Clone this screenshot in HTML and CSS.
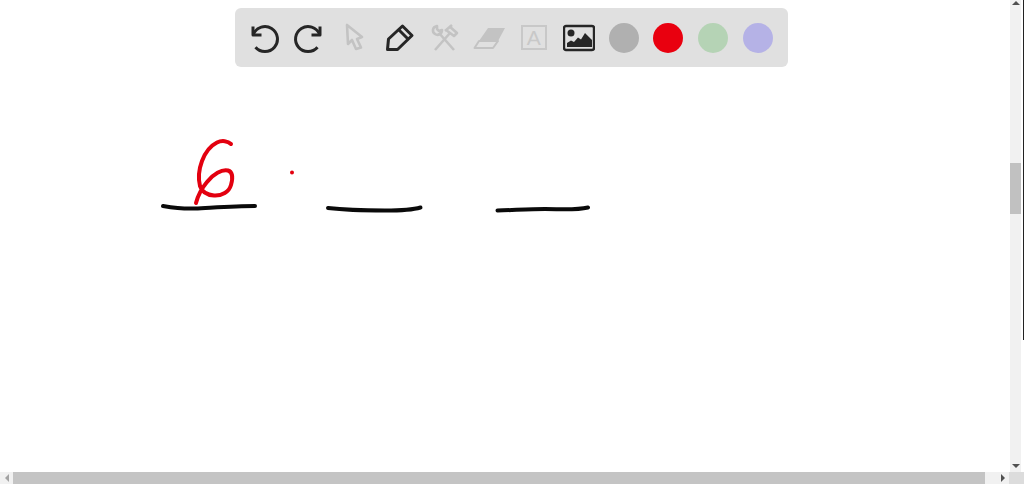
FILE: index.html
```html
<!DOCTYPE html>
<html lang="en">
<head>
    <meta charset="UTF-8">
    <meta name="viewport" content="width=device-width, initial-scale=1.0">
    <title>Whiteboard</title>
    <link rel="stylesheet" href="styles.css">
</head>
<body>
    <div class="app">
        <div class="main">
            <div class="board">
                <svg class="drawing" width="1010" height="472" viewBox="0 0 1010 472">
                    <g class="ink-black">
                        <path d="M163 206 C175 208 185 209 195 208.500 C215 207.500 235 206 255 206"/>
                        <path d="M328 208 C345 210 365 210.500 385 210.500 C400 210.500 412 210 420.500 207.500"/>
                        <path d="M497.500 210.500 C515 210 530 209 545 209 C560 209 575 210.500 588 207.500"/>
                    </g>
                    <path class="ink-red" d="M231 144 C228 141 222 140 217 142.500 C210 146 205 153 202 161 C199 169 198 178 200 186 C202 192 207 195 214 195.500 C222 196 229 192 231 185 C233 178 232.500 172 228 170.500 C222 169 213 174 207 182 C202 188 198 195 196 203"/>
                    <circle class="ink-dot" cx="292" cy="172.500" r="2"/>
                </svg>
                <div class="toolbar">
                    <button class="tool">
                        <svg class="icon" width="32" height="32" viewBox="0 0 32 32"><path class="line-dark" d="M5.500 12 A12.500 12.500 0 1 1 7.500 25.200"/><path class="line-dark" d="M5 4.500 V13 H13.500"/></svg>
                    </button>
                    <button class="tool">
                        <svg class="icon" width="32" height="32" viewBox="0 0 32 32"><path class="line-dark" d="M26.500 12 A12.500 12.500 0 1 0 24.500 25.200"/><path class="line-dark" d="M27 4.500 V13 H18.500"/></svg>
                    </button>
                    <button class="tool">
                        <svg class="icon" width="32" height="32" viewBox="0 0 32 32"><path class="line-muted" d="M9 3 L10 22 L14 18 L18 27 L23 25.500 L19 17 L24 15 Z"/></svg>
                    </button>
                    <button class="tool">
                        <svg class="icon" width="32" height="32" viewBox="0 0 32 32"><path class="line-dark" d="M4.500 27.500 L5.500 17 L19.500 4 L29 13.500 L14.500 27.500 Z"/><path class="line-dark" d="M16 8 L25.500 17.500"/></svg>
                    </button>
                    <button class="tool">
                        <svg class="icon" width="32" height="32" viewBox="0 0 32 32"><path class="line-muted" d="M11 11 L26 28 M22 11 L7 28"/><path class="line-muted" d="M9 4 C4 5 4 10 7 12 C10 14 14 12 14 8 L11 9 L9 7 Z"/><path class="line-muted" d="M17 9 L24 3 M21 4 L29 11 L26 14 L18 8"/></svg>
                    </button>
                    <button class="tool">
                        <svg class="icon" width="32" height="32" viewBox="0 0 32 32"><path class="fill-muted" d="M6 19 L15 6 L32 6 L25 19 Z"/><path class="line-thin" d="M6 19 L1.500 26 L20 26 L25 19 Z"/></svg>
                    </button>
                    <button class="tool">
                        <span class="text-tool">A</span>
                    </button>
                    <button class="tool">
                        <svg class="icon" width="32" height="32" viewBox="0 0 32 32"><rect class="line-frame" x="1" y="4" width="30" height="24" rx="2"/><circle class="fill-dark" cx="8" cy="11" r="3.500"/><path class="fill-dark" d="M4 25 V21 L8 18.500 L11 20 L15 15.500 L18 17.500 L22 11 L29 18 V25 Z"/></svg>
                    </button>
                    <button class="tool"><span class="swatch swatch-gray"></span></button>
                    <button class="tool"><span class="swatch swatch-red"></span></button>
                    <button class="tool"><span class="swatch swatch-green"></span></button>
                    <button class="tool"><span class="swatch swatch-purple"></span></button>
                </div>
            </div>
            <div class="vscroll">
                <span class="arrow arrow-up"></span>
                <div class="vthumb"></div>
                <span class="arrow arrow-down"></span>
            </div>
            <div class="edge-gap"><div class="edge-line"></div></div>
        </div>
        <div class="hscroll">
            <div class="hbutton"><span class="arrow arrow-left"></span></div>
            <div class="hthumb"></div>
            <div class="hbutton"><span class="arrow arrow-right"></span></div>
            <div class="corner"></div>
        </div>
    </div>
</body>
</html>
```

FILE: styles.css
```css
body {
    margin: 0;
    background: #fff;
    font-family: "Liberation Sans", Arial, sans-serif;
    overflow: hidden;
}
.app {
    display: flex;
    flex-direction: column;
    height: 484px;
}
.main {
    display: flex;
    height: 472px;
}
.board {
    position: relative;
    width: 1010px;
}
.drawing {
    display: block;
}
.ink-black, .ink-red {
    fill: none;
    stroke-linecap: round;
    stroke-linejoin: round;
}
.ink-black {
    stroke: #0a0a0a;
    stroke-width: 4;
}
.ink-red {
    stroke: #e3000f;
    stroke-width: 4;
}
.ink-dot {
    fill: #e3000f;
}

/* toolbar sits over the board */
.toolbar {
    position: absolute;
    top: 8px;
    left: 235px;
    display: flex;
    align-items: center;
    box-sizing: border-box;
    width: 553px;
    height: 59px;
    padding: 0 0 0 7px;
    background: #e0e0e0;
    border-radius: 6px;
}
.tool {
    display: flex;
    align-items: center;
    justify-content: center;
    width: 44.900px;
    height: 44px;
    padding: 0;
    border: 0;
    background: none;
}
.icon {
    display: block;
    fill: none;
}
.line-dark, .line-muted, .line-thin, .line-frame {
    fill: none;
    stroke-linejoin: round;
}
.line-dark {
    stroke: #262626;
    stroke-width: 3;
}
.line-muted {
    stroke: #c3c3c3;
    stroke-width: 2.600;
}
.line-thin {
    stroke: #c3c3c3;
    stroke-width: 2;
}
.line-frame {
    stroke: #262626;
    stroke-width: 2.400;
}
.fill-muted {
    fill: #c3c3c3;
}
.fill-dark {
    fill: #262626;
}
.text-tool {
    display: flex;
    align-items: center;
    justify-content: center;
    box-sizing: border-box;
    width: 26px;
    height: 25px;
    border: 2px solid #c8c8c8;
    color: #c8c8c8;
    font-size: 21px;
    line-height: 1;
}
.swatch {
    display: block;
    width: 30px;
    height: 30px;
    border-radius: 50%;
}
.swatch-gray {
    background: #b0b0b0;
}
.swatch-red {
    background: #e9000f;
}
.swatch-green {
    background: #b5d3b5;
}
.swatch-purple {
    background: #b5b2e6;
}

/* scrollbars */
.vscroll {
    display: flex;
    flex-direction: column;
    align-items: center;
    width: 11px;
    background: #f1f1f1;
}
.vthumb {
    width: 100%;
    height: 51px;
    margin-top: 158px;
    margin-bottom: auto;
    background: #c1c1c1;
}
.edge-gap {
    flex: 1;
    display: flex;
    justify-content: flex-end;
}
.edge-line {
    width: 1px;
    height: 340px;
    background: #222;
}
.arrow {
    display: block;
    width: 0;
    height: 0;
    border: 4px solid transparent;
}
.arrow-up {
    margin-top: 1px;
    border-top: 0;
    border-bottom-color: #505050;
}
.arrow-down {
    margin-bottom: 4px;
    border-bottom: 0;
    border-top-color: #505050;
}
.arrow-left {
    border-left: 0;
    border-right-color: #a3a3a3;
}
.arrow-right {
    border-right: 0;
    border-left-color: #505050;
}
.hscroll {
    display: flex;
    height: 12px;
    background: #f1f1f1;
}
.hbutton {
    display: flex;
    align-items: center;
    justify-content: center;
    width: 13px;
}
.hthumb {
    width: 972px;
    margin-right: 11px;
    background: #c4c4c4;
}
.corner {
    flex: 1;
    background: #dcdcdc;
}
```
